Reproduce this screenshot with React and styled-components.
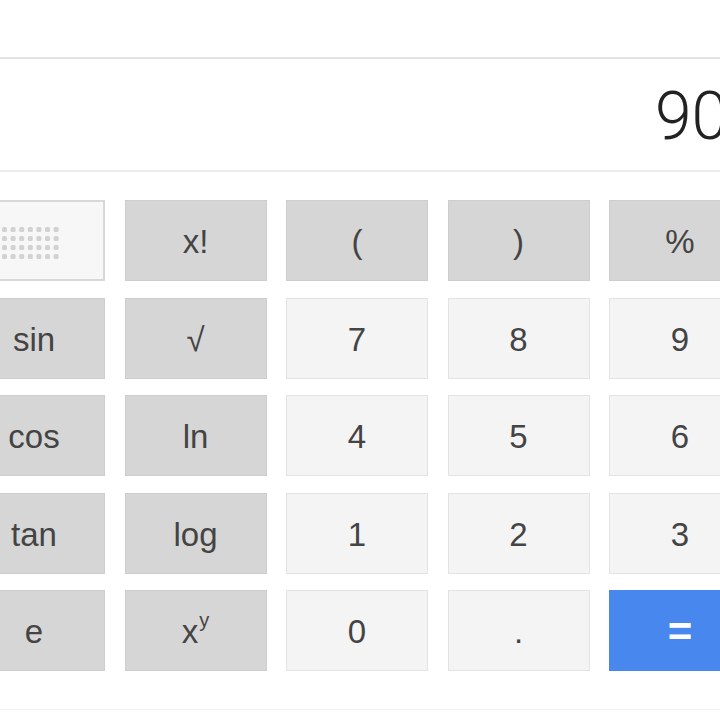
import React from 'react';
import styled, { createGlobalStyle } from 'styled-components';

const GlobalStyle = createGlobalStyle`
  html, body {
    margin: 0;
    padding: 0;
    background: #ffffff;
    overflow: hidden;
  }
  body {
    font-family: "Liberation Sans", Arial, sans-serif;
  }
`;

const keys = [
  [{ kind: 'toggle' }, { label: 'x!', tone: 'dark' }, { label: '(', tone: 'dark' }, { label: ')', tone: 'dark' }, { label: '%', tone: 'dark' }],
  [{ label: 'sin', tone: 'dark' }, { label: '√', tone: 'dark' }, { label: '7' }, { label: '8' }, { label: '9' }],
  [{ label: 'cos', tone: 'dark' }, { label: 'ln', tone: 'dark' }, { label: '4' }, { label: '5' }, { label: '6' }],
  [{ label: 'tan', tone: 'dark' }, { label: 'log', tone: 'dark' }, { label: '1' }, { label: '2' }, { label: '3' }],
  [{ label: 'e', tone: 'dark' }, { kind: 'pow', tone: 'dark' }, { label: '0' }, { label: '.' }, { label: '=', tone: 'blue' }],
];

const DotGrid = () => {
  const dots = [];
  for (let r = 0; r < 4; r++) {
    for (let c = 0; c < 7; c++) {
      dots.push(<rect key={r + '-' + c} x={c * 8.6} y={r * 9} width="5" height="5" rx="1.5" fill="#d2d2d2" />);
    }
  }
  return (
    <svg width="62" height="32" viewBox="0 0 62 32">
      {dots}
    </svg>
  );
};

const App = () => {
  return (
    <Page>
      <GlobalStyle />
      <TopSpace />
      <Display>
        <Value>90</Value>
      </Display>
      <Keypad>
        {keys.flat().map((k, i) => {
          if (k.kind === 'toggle') {
            return (
              <ToggleKey key={i}>
                <DotGrid />
              </ToggleKey>
            );
          }
          if (k.kind === 'pow') {
            return (
              <Key key={i} tone="dark">
                x<Sup>y</Sup>
              </Key>
            );
          }
          return (
            <Key key={i} tone={k.tone}>
              {k.label}
            </Key>
          );
        })}
      </Keypad>
      <Footer />
    </Page>
  );
};

const Page = styled.div`
  width: 720px;
  height: 720px;
  overflow: hidden;
  background: #fff;
`;

const TopSpace = styled.div`
  height: 57px;
`;

const Display = styled.div`
  height: 111px;
  border-top: 2px solid #e2e2e2;
  border-bottom: 2px solid #ececec;
  display: flex;
  align-items: center;
  padding-left: 655px;
  overflow: hidden;
`;

const Value = styled.span`
  font-family: Roboto, "Liberation Sans", sans-serif;
  font-weight: 300;
  font-size: 66px;
  color: #222;
  white-space: nowrap;
  margin-top: 4px;
`;

const Keypad = styled.div`
  display: grid;
  grid-template-columns: repeat(5, 142px);
  grid-auto-rows: 81px;
  column-gap: 19.5px;
  row-gap: 16.5px;
  margin-left: -37px;
  padding-top: 28px;
`;

const Key = styled.div`
  box-sizing: border-box;
  display: flex;
  align-items: center;
  justify-content: center;
  font-size: ${(p) => (p.tone === 'blue' ? '42px' : '33px')};
  color: ${(p) => (p.tone === 'blue' ? '#fff' : '#444')};
  font-weight: ${(p) => (p.tone === 'blue' ? 700 : 400)};
  background: ${(p) => (p.tone === 'dark' ? '#d6d6d6' : p.tone === 'blue' ? '#4787ee' : '#f4f4f4')};
  border: 1px solid ${(p) => (p.tone === 'dark' ? '#cdcdcd' : p.tone === 'blue' ? '#4787ee' : '#e3e3e3')};
  padding-top: 3px;
`;

const ToggleKey = styled.div`
  box-sizing: border-box;
  display: flex;
  align-items: center;
  justify-content: flex-start;
  padding-left: 37px;
  padding-top: 4px;
  background: #f7f7f7;
  border: 2px solid #d8d8d8;
`;

const Sup = styled.span`
  display: inline-block;
  font-size: 20px;
  transform: translateY(-12px);
  margin-left: 1px;
`;

const Footer = styled.div`
  margin-top: 38px;
  border-top: 1px solid #f3f3f3;
`;

export default App;
